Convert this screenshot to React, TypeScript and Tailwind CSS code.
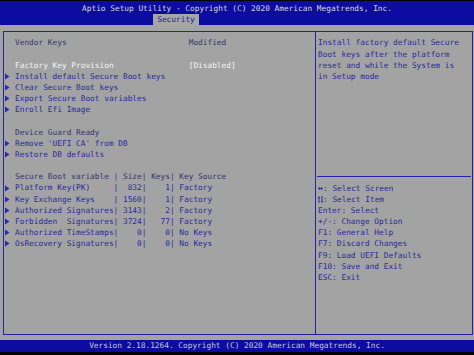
import React from 'react'

const rows: { text: string; kind: 'static' | 'item' | 'selected' | 'blank' }[] = [
  { text: 'Vendor Keys                          Modified', kind: 'static' },
  { text: '', kind: 'blank' },
  { text: 'Factory Key Provision                [Disabled]', kind: 'selected' },
  { text: 'Install default Secure Boot keys', kind: 'item' },
  { text: 'Clear Secure Boot keys', kind: 'item' },
  { text: 'Export Secure Boot variables', kind: 'item' },
  { text: 'Enroll Efi Image', kind: 'item' },
  { text: '', kind: 'blank' },
  { text: 'Device Guard Ready', kind: 'static' },
  { text: "Remove 'UEFI CA' from DB", kind: 'item' },
  { text: 'Restore DB defaults', kind: 'item' },
  { text: '', kind: 'blank' },
  { text: 'Secure Boot variable | Size| Keys| Key Source', kind: 'static' },
  { text: 'Platform Key(PK)     |  832|    1| Factory', kind: 'item' },
  { text: 'Key Exchange Keys    | 1560|    1| Factory', kind: 'item' },
  { text: 'Authorized Signatures| 3143|    2| Factory', kind: 'item' },
  { text: 'Forbidden  Signatures| 3724|   77| Factory', kind: 'item' },
  { text: 'Authorized TimeStamps|    0|    0| No Keys', kind: 'item' },
  { text: 'OsRecovery Signatures|    0|    0| No Keys', kind: 'item' },
]

const description = [
  'Install factory default Secure',
  'Boot keys after the platform',
  'reset and while the System is',
  'in Setup mode',
]

const help: { key: React.ReactNode; label: string }[] = [
  {
    key: (
      <svg width="5" height="7" viewBox="0 0 5 7" className="inline-block align-[-1px]">
        <path d="M0 3.5 L1.8 1.8 L1.8 5.2 Z M5 3.5 L3.2 1.8 L3.2 5.2 Z" fill="currentColor" />
        <rect x="1" y="3" width="3" height="1" fill="currentColor" />
      </svg>
    ),
    label: ': Select Screen',
  },
  {
    key: (
      <svg width="5" height="7" viewBox="0 0 5 7" className="inline-block align-[-1px]">
        <path d="M1 0 L2.2 2 L-0.2 2 Z M4 7 L5.2 5 L2.8 5 Z" fill="currentColor" />
        <rect x="0.5" y="1.5" width="1" height="5.5" fill="currentColor" />
        <rect x="3.5" y="0" width="1" height="5.5" fill="currentColor" />
      </svg>
    ),
    label: ': Select Item',
  },
  { key: 'Enter', label: ': Select' },
  { key: '+/-', label: ': Change Option' },
  { key: 'F1', label: ': General Help' },
  { key: 'F7', label: ': Discard Changes' },
  { key: 'F9', label: ': Load UEFI Defaults' },
  { key: 'F10', label: ': Save and Exit' },
  { key: 'ESC', label: ': Exit' },
]

const Arrow = () => (
  <svg width="5" height="7" viewBox="0 0 5 7" className="ml-px">
    <path d="M0 0.5 L4.5 3.5 L0 6.5 Z" fill="#2a2aa6" />
  </svg>
)

export default function App() {
  return (
    <div
      className="w-[474px] h-[355px] bg-black flex flex-col pt-px pb-[3px] overflow-hidden text-[7.8px] leading-[11.17px]"
      style={{ fontFamily: '"DejaVu Sans Mono", monospace' }}
    >
      {/* Title bar */}
      <div className="h-[24px] bg-[#0c0ca0] flex flex-col items-center">
        <div className="text-[#d4d4dc] whitespace-pre mt-[2px] leading-[11px]">
          Aptio Setup Utility - Copyright (C) 2020 American Megatrends, Inc.
        </div>
        <div className="flex w-full pl-[153px]">
          <div className="bg-[#a6a6a6] text-[#20209a] h-[11px] w-[46px] flex items-center justify-center leading-[11px]">
            Security
          </div>
        </div>
      </div>

      {/* Body */}
      <div className="flex-1 bg-[#a3a3a3] pt-[6px] pb-[5px] pl-[3px] pr-px">
        <div className="h-full border border-[#2424a0] flex">
          {/* Left panel */}
          <div className="w-[311px] pt-[5.4px] flex flex-col">
            {rows.map((r, i) => (
              <div key={i} className="h-[11.17px] flex items-center">
                <div className="w-[11px] flex items-center">{r.kind === 'item' && <Arrow />}</div>
                <div
                  className={
                    'whitespace-pre ' +
                    (r.kind === 'selected'
                      ? 'text-[#f4f4f4]'
                      : r.kind === 'item'
                        ? 'text-[#2a2a9c]'
                        : 'text-[#36366e]')
                  }
                >
                  {r.text}
                </div>
              </div>
            ))}
          </div>

          {/* Right panel */}
          <div className="flex-1 border-l border-[#2424a0] flex flex-col">
            <div className="h-[145px] mx-px border-b border-[#2424a0] pt-[5.4px] pl-px text-[#2a2a9c]">
              {description.map((l, i) => (
                <div key={i} className="h-[11.17px] whitespace-pre">
                  {l}
                </div>
              ))}
            </div>
            <div className="pt-[5.6px] pl-[2px] text-[#2a2a9c]">
              {help.map((h, i) => (
                <div key={i} className="h-[11.17px] whitespace-pre flex items-center">
                  <span>{h.key}</span>
                  <span>{h.label}</span>
                </div>
              ))}
            </div>
          </div>
        </div>
      </div>

      {/* Footer */}
      <div className="h-[12px] bg-[#0c0ca0] flex items-center justify-center">
        <div className="text-[#c4c4d8] whitespace-pre leading-[12px]">
          Version 2.18.1264. Copyright (C) 2020 American Megatrends, Inc.
        </div>
      </div>
    </div>
  )
}
